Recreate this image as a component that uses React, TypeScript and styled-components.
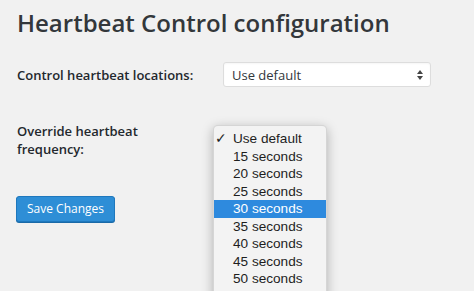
import React from "react";
import styled, { createGlobalStyle } from "styled-components";

const Global = createGlobalStyle`
  html, body { margin: 0; padding: 0; background: #f1f1f1; overflow: hidden; }
  body { width: 474px; height: 291px; }
`;

const Page = styled.div`
  height: 291px;
  padding: 0 17px;
  box-sizing: border-box;
  font-family: "Open Sans", sans-serif;
  color: #23282d;
  overflow: hidden;
`;

const Title = styled.h1`
  margin: 0;
  padding-top: 6px;
  font-size: 24px;
  font-weight: 600;
  line-height: 34px;
  color: #33373b;
`;

const FormGrid = styled.div`
  display: grid;
  grid-template-columns: 206px 208px;
  margin-top: 22px;
`;

const Label = styled.div<{ $top?: number }>`
  font-size: 13px;
  font-weight: 600;
  line-height: 18px;
  max-width: 180px;
  color: #23282d;
  align-self: ${(p) => (p.$top !== undefined ? "start" : "center")};
  padding-top: ${(p) => p.$top ?? 0}px;
`;

const Field = styled.div<{ $mt?: number }>`
  position: relative;
  margin-top: ${(p) => p.$mt ?? 0}px;
`;

const SelectBox = styled.div<{ $w?: number }>`
  width: ${(p) => (p.$w ? `${p.$w}px` : "auto")};
  height: 25px;
  box-sizing: border-box;
  background: #fff;
  border: 1px solid #dddddd;
  border-radius: 3px;
  box-shadow: inset 0 1px 2px rgba(0, 0, 0, 0.04);
  display: flex;
  align-items: center;
  justify-content: space-between;
  padding: 0 7px 0 8px;
  font-size: 13px;
  color: #32373c;
`;

const Arrows = styled.svg`
  width: 6px;
  height: 10px;
`;

const Menu = styled.div`
  position: absolute;
  left: -10px;
  top: -1px;
  width: 112px;
  padding: 4px 0 30px;
  background: #f3f3f3;
  border: 1px solid rgba(0, 0, 0, 0.12);
  border-radius: 5px;
  box-shadow: 0 3px 12px rgba(0, 0, 0, 0.28);
  font-family: "Liberation Sans", Arial, sans-serif;
  font-size: 13.6px;
  color: #1e1e1e;
`;

const Item = styled.div<{ $active?: boolean }>`
  height: 17.5px;
  line-height: 17.5px;
  position: relative;
  padding-left: 19px;
  background: ${(p) => (p.$active ? "#2e8ade" : "transparent")};
  color: ${(p) => (p.$active ? "#ffffff" : "#1e1e1e")};
`;

const Check = styled.span`
  position: absolute;
  left: 1px;
  top: 0;
  font-family: "DejaVu Sans", sans-serif;
  font-size: 14px;
  font-weight: 700;
`;

const Button = styled.button`
  margin-top: 38px;
  height: 26px;
  padding: 0 10px;
  background: #2e8ed6;
  border: 1px solid #1f78bd;
  border-radius: 3px;
  box-shadow: 0 1px 0 #1a6aa8;
  color: #fff;
  font-family: "Open Sans", sans-serif;
  font-size: 12px;
  line-height: 24px;
  cursor: pointer;
  display: block;
  margin-left: -1px;
`;

const options = [
  "Use default",
  "15 seconds",
  "20 seconds",
  "25 seconds",
  "30 seconds",
  "35 seconds",
  "40 seconds",
  "45 seconds",
  "50 seconds",
];

const SelectArrows = () => (
  <Arrows viewBox="0 0 6 10">
    <path d="M3 0 L6 4 L0 4 Z" fill="#444" />
    <path d="M3 10 L6 6 L0 6 Z" fill="#444" />
  </Arrows>
);

export default function App() {
  return (
    <>
      <Global />
      <Page>
        <Title>Heartbeat Control configuration</Title>
        <FormGrid>
          <Label>Control heartbeat locations:</Label>
          <Field>
            <SelectBox>
              <span>Use default</span>
              <SelectArrows />
            </SelectBox>
          </Field>
          <Label $top={35}>
            Override heartbeat
            <br />
            frequency:
          </Label>
          <Field $mt={39}>
            <SelectBox $w={100} aria-hidden="true" />
            <Menu>
              {options.map((o, i) => (
                <Item key={o} $active={i === 4}>
                  {i === 0 && <Check>✓</Check>}
                  {o}
                </Item>
              ))}
            </Menu>
          </Field>
        </FormGrid>
        <Button>Save Changes</Button>
      </Page>
    </>
  );
}
